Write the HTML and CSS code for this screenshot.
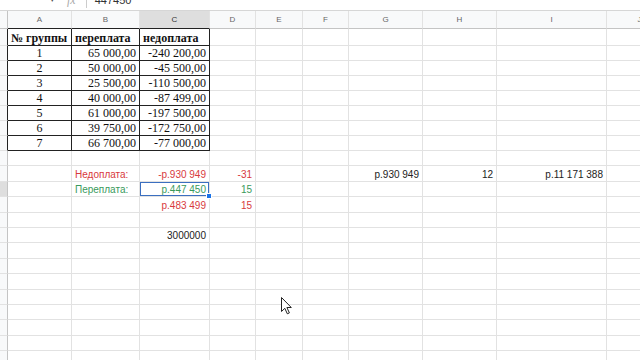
FILE: index.html
```html
<!DOCTYPE html>
<html lang="ru">
<head>
    <meta charset="UTF-8">
    <title>Таблица</title>
    <link rel="stylesheet" href="styles.css">
</head>
<body>

    <!-- Строка формул -->
    <div class="formula-bar">
        <span class="fb-arrow">&#9662;</span>
        <span class="fb-fx">fx</span>
        <span class="fb-sep"></span>
        <span class="fb-value">447450</span>
    </div>

    <table class="sheet">
        <colgroup>
            <col class="w-rh"><col class="w-a"><col class="w-b"><col class="w-c"><col class="w-d">
            <col class="w-e"><col class="w-f"><col class="w-g"><col class="w-h"><col class="w-i"><col class="w-j">
        </colgroup>
        <tr class="head">
            <td class="corner"></td>
            <td class="ch tb">A</td><td class="ch tb">B</td><td class="ch tb sel">C</td><td class="ch">D</td>
            <td class="ch">E</td><td class="ch">F</td><td class="ch">G</td><td class="ch">H</td><td class="ch">I</td><td class="ch">J</td>
        </tr>
        <tr class="r1">
            <td class="rh tl"></td>
            <td class="t bold">№ группы</td><td class="t bold">переплата</td><td class="t bold">недоплата</td>
            <td></td><td></td><td></td><td></td><td></td><td></td><td></td>
        </tr>
        <tr class="r">
            <td class="rh tl"></td>
            <td class="t center">1</td><td class="t right">65 000,00</td><td class="t right">-240 200,00</td>
            <td></td><td></td><td></td><td></td><td></td><td></td><td></td>
        </tr>
        <tr class="r">
            <td class="rh tl"></td>
            <td class="t center">2</td><td class="t right">50 000,00</td><td class="t right">-45 500,00</td>
            <td></td><td></td><td></td><td></td><td></td><td></td><td></td>
        </tr>
        <tr class="r">
            <td class="rh tl"></td>
            <td class="t center">3</td><td class="t right">25 500,00</td><td class="t right">-110 500,00</td>
            <td></td><td></td><td></td><td></td><td></td><td></td><td></td>
        </tr>
        <tr class="r">
            <td class="rh tl"></td>
            <td class="t center">4</td><td class="t right">40 000,00</td><td class="t right">-87 499,00</td>
            <td></td><td></td><td></td><td></td><td></td><td></td><td></td>
        </tr>
        <tr class="r">
            <td class="rh tl"></td>
            <td class="t center">5</td><td class="t right">61 000,00</td><td class="t right">-197 500,00</td>
            <td></td><td></td><td></td><td></td><td></td><td></td><td></td>
        </tr>
        <tr class="r">
            <td class="rh tl"></td>
            <td class="t center">6</td><td class="t right">39 750,00</td><td class="t right">-172 750,00</td>
            <td></td><td></td><td></td><td></td><td></td><td></td><td></td>
        </tr>
        <tr class="r">
            <td class="rh tl"></td>
            <td class="t center">7</td><td class="t right">66 700,00</td><td class="t right">-77 000,00</td>
            <td></td><td></td><td></td><td></td><td></td><td></td><td></td>
        </tr>
        <!-- Итоги -->
        <tr class="r2">
            <td class="rh"></td><td></td><td></td><td></td><td></td><td></td><td></td><td></td><td></td><td></td><td></td>
        </tr>
        <tr class="r2">
            <td class="rh"></td><td></td>
            <td class="s red">Недоплата:</td><td class="s right red">-р.930 949</td><td class="s right red">-31</td>
            <td></td><td></td>
            <td class="s right">р.930 949</td><td class="s right">12</td><td class="s right">р.11 171 388</td><td></td>
        </tr>
        <tr class="r2">
            <td class="rh sel"></td><td></td>
            <td class="s green">Переплата:</td><td class="s right green active">р.447 450</td><td class="s right green">15</td>
            <td></td><td></td><td></td><td></td><td></td><td></td>
        </tr>
        <tr class="r2">
            <td class="rh"></td><td></td><td></td>
            <td class="s right red">р.483 499</td><td class="s right red">15</td>
            <td></td><td></td><td></td><td></td><td></td><td></td>
        </tr>
        <tr class="r2">
            <td class="rh"></td><td></td><td></td><td></td><td></td><td></td><td></td><td></td><td></td><td></td><td></td>
        </tr>
        <tr class="r2">
            <td class="rh"></td><td></td><td></td>
            <td class="s right">3000000</td>
            <td></td><td></td><td></td><td></td><td></td><td></td><td></td>
        </tr>
        <tr class="r2"><td class="rh"></td><td></td><td></td><td></td><td></td><td></td><td></td><td></td><td></td><td></td><td></td></tr>
        <tr class="r2"><td class="rh"></td><td></td><td></td><td></td><td></td><td></td><td></td><td></td><td></td><td></td><td></td></tr>
        <tr class="r2"><td class="rh"></td><td></td><td></td><td></td><td></td><td></td><td></td><td></td><td></td><td></td><td></td></tr>
        <tr class="r2"><td class="rh"></td><td></td><td></td><td></td><td></td><td></td><td></td><td></td><td></td><td></td><td></td></tr>
        <tr class="r2"><td class="rh"></td><td></td><td></td><td></td><td></td><td></td><td></td><td></td><td></td><td></td><td></td></tr>
        <tr class="r2"><td class="rh"></td><td></td><td></td><td></td><td></td><td></td><td></td><td></td><td></td><td></td><td></td></tr>
        <tr class="r2"><td class="rh"></td><td></td><td></td><td></td><td></td><td></td><td></td><td></td><td></td><td></td><td></td></tr>
        <tr class="r2"><td class="rh"></td><td></td><td></td><td></td><td></td><td></td><td></td><td></td><td></td><td></td><td></td></tr>
    </table>

    <!-- Курсор мыши -->
    <svg class="cursor" width="13" height="19" viewBox="0 0 13 19">
        <path d="M1.5 1.5 L1.5 15.5 L4.8 12.3 L7.3 17.8 L9.4 16.9 L6.9 11.5 L11.3 11.5 Z" fill="#fff" stroke="#222" stroke-width="1" stroke-linejoin="round"/>
    </svg>

</body>
</html>
```

FILE: styles.css
```css
html, body {
    margin: 0;
    padding: 0;
    background: #fff;
    overflow: hidden;
    width: 640px;
    height: 360px;
    position: relative;
}
.formula-bar {
    height: 10px;
    border-bottom: 1px solid #d6d6d6;
    overflow: hidden;
    display: flex;
    align-items: flex-start;
    font-family: "Liberation Sans", Arial, sans-serif;
    font-size: 11px;
    line-height: 14px;
    color: #333;
}
.fb-arrow {
    margin: -8px 0 0 50px;
    font-size: 9px;
    color: #555;
}
.fb-fx {
    margin: -7px 0 0 12px;
    font-family: "Liberation Serif", serif;
    font-style: italic;
    color: #aaa;
    font-size: 12px;
}
.fb-sep {
    width: 1px;
    height: 8px;
    background: #ccc;
    margin-left: 10px;
}
.fb-value {
    margin: -7px 0 0 8px;
}
.sheet {
    border-collapse: separate;
    border-spacing: 0;
    table-layout: fixed;
    width: 673px;
}
.w-rh { width: 8px; }
.w-a { width: 64px; }
.w-b { width: 68px; }
.w-c { width: 70px; }
.w-d { width: 46px; }
.w-e { width: 47px; }
.w-f { width: 46px; }
.w-g { width: 74px; }
.w-h { width: 74px; }
.w-i { width: 110px; }
.w-j { width: 66px; }
.sheet td {
    box-sizing: border-box;
    padding: 0 3px;
    border-right: 1px solid #e2e2e2;
    border-bottom: 1px solid #e2e2e2;
    white-space: nowrap;
    overflow: hidden;
    vertical-align: bottom;
    font-family: "Liberation Sans", Arial, sans-serif;
    font-size: 10px;
    line-height: 13px;
    color: #222;
}
.sheet .s {
    line-height: 10px;
    padding-bottom: 1px;
}
.head { height: 18px; }
.r1 { height: 17px; }
.r { height: 15px; }
.r2 { height: 15.4px; }
.sheet .corner {
    background: #f8f9fa;
    border-right: 1px solid #c4c4c4;
    border-bottom: 1px solid #c4c4c4;
}
.sheet .ch {
    background: #f8f9fa;
    border-bottom: 1px solid #c4c4c4;
    text-align: center;
    vertical-align: middle;
    font-size: 8px;
    color: #666;
}
.sheet .rh {
    padding: 0;
    background: #f8f9fa;
    border-right: 1px solid #c4c4c4;
}
.sheet .sel {
    background: #dedede;
    color: #333;
}
/* Рамка таблицы с данными */
.sheet .ch.tb {
    border-bottom: 1px solid #222;
}
.sheet .rh.tl {
    border-right: 1px solid #222;
}
.sheet .t {
    border-right: 1px solid #222;
    border-bottom: 1px solid #222;
    font-family: "Liberation Serif", "Times New Roman", serif;
    font-size: 12px;
    line-height: 14px;
    color: #111;
}
.bold { font-weight: bold; }
.center { text-align: center; }
.right { text-align: right; }
.sheet .red { color: #d8393d; }
.sheet .green { color: #3a9a5c; }
.sheet .active {
    position: relative;
    box-shadow: inset 0 0 0 1px #3b6fc0;
    overflow: visible;
}
.sheet .active::after {
    content: "";
    position: absolute;
    right: -3px;
    bottom: -3px;
    width: 4px;
    height: 4px;
    background: #1a73e8;
    border: 1px solid #fff;
}
.cursor {
    position: absolute;
    left: 280px;
    top: 296px;
}
```
